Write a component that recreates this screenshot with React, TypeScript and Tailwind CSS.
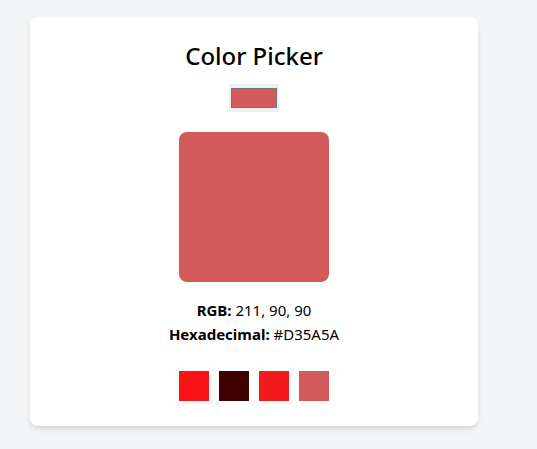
const swatches = ["#f81414", "#3f0000", "#f21a1a", "#d35a5a"];

function ColorInput() {
  return (
    <div className="flex h-[28px] w-[50px] items-center justify-center bg-[#efefef]">
      <div className="h-[20px] w-[46px] border border-[#767676] bg-[#d35a5a]" />
    </div>
  );
}

export default function App() {
  return (
    <div
      className="min-h-[449px] bg-[#f3f4f6] pl-[30px] pt-[17px]"
      style={{ fontFamily: '"Noto Sans", "Open Sans", sans-serif' }}
    >
      <div className="flex w-[448px] flex-col items-center rounded-lg bg-white px-6 pb-[25px] pt-[23px] shadow-md">
        <h1 className="text-2xl leading-8 font-medium text-black">Color Picker</h1>
        <div className="mt-[12px]">
          <ColorInput />
        </div>
        <div className="mt-[20px] h-[150px] w-[150px] rounded-lg bg-[#d35a5a]" />
        <div className="mt-[16px] flex flex-col items-center text-[15px] leading-6 text-black">
          <p>
            <span className="font-bold">RGB:</span> 211, 90, 90
          </p>
          <p>
            <span className="font-bold">Hexadecimal:</span> #D35A5A
          </p>
        </div>
        <div className="mt-[25px] flex gap-[10px]">
          {swatches.map((c) => (
            <div key={c} className="h-[30px] w-[30px]" style={{ backgroundColor: c }} />
          ))}
        </div>
      </div>
    </div>
  );
}
